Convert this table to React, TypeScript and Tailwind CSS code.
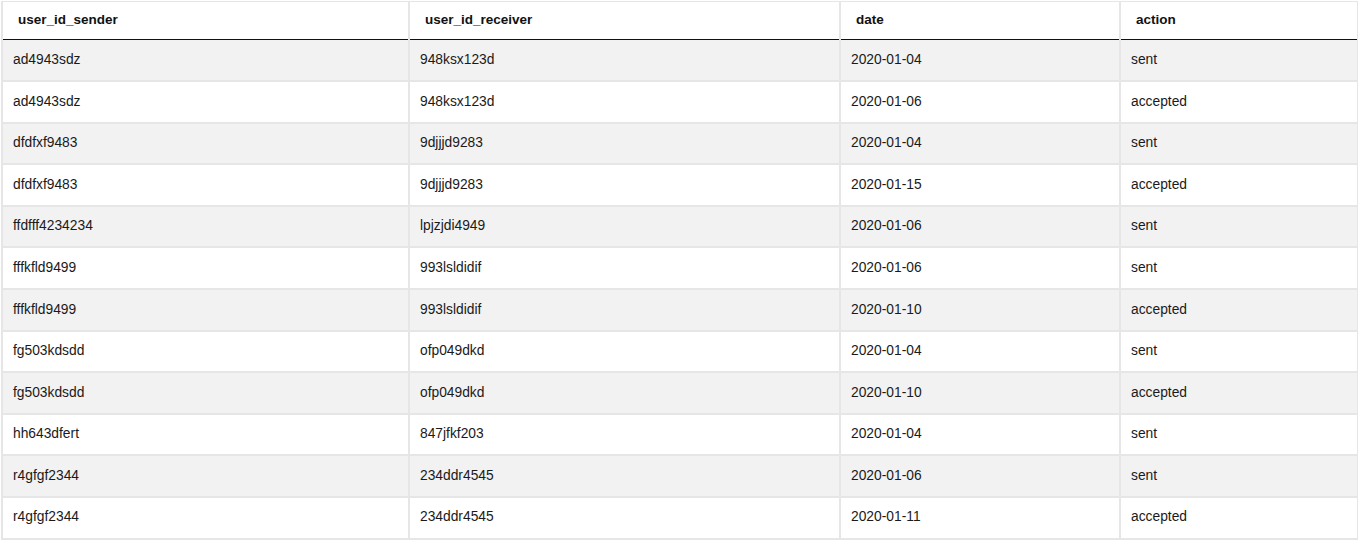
const rows: [string, string, string, string][] = [
  ["ad4943sdz", "948ksx123d", "2020-01-04", "sent"],
  ["ad4943sdz", "948ksx123d", "2020-01-06", "accepted"],
  ["dfdfxf9483", "9djjjd9283", "2020-01-04", "sent"],
  ["dfdfxf9483", "9djjjd9283", "2020-01-15", "accepted"],
  ["ffdfff4234234", "lpjzjdi4949", "2020-01-06", "sent"],
  ["fffkfld9499", "993lsldidif", "2020-01-06", "sent"],
  ["fffkfld9499", "993lsldidif", "2020-01-10", "accepted"],
  ["fg503kdsdd", "ofp049dkd", "2020-01-04", "sent"],
  ["fg503kdsdd", "ofp049dkd", "2020-01-10", "accepted"],
  ["hh643dfert", "847jfkf203", "2020-01-04", "sent"],
  ["r4gfgf2344", "234ddr4545", "2020-01-06", "sent"],
  ["r4gfgf2344", "234ddr4545", "2020-01-11", "accepted"],
];

const headers = ["user_id_sender", "user_id_receiver", "date", "action"];
const widths = ["w-[407px]", "w-[431px]", "w-[280px]", "w-[238px]"];

export default function App() {
  return (
    <div className="bg-white pt-px pl-px font-['Liberation_Sans',Arial,sans-serif] text-[#1a1a1a]">
      <table className="w-[1356px] table-fixed border-collapse">
        <colgroup>
          {widths.map((w, i) => (
            <col key={i} className={w} />
          ))}
        </colgroup>
        <thead>
          <tr className="h-[38px]">
            {headers.map((h) => (
              <th
                key={h}
                className="border-x-2 border-t border-b border-[#e6e6e6] border-b-[#111] pl-[15px] text-left align-middle text-[13.5px] font-bold text-[#111]"
              >
                {h}
              </th>
            ))}
          </tr>
        </thead>
        <tbody>
          {rows.map((r, i) => (
            <tr key={i} className={`h-[41.6px] ${i % 2 === 0 ? "bg-[#f2f2f2]" : "bg-white"}`}>
              {r.map((c, j) => (
                <td
                  key={j}
                  className="border-x-2 border-b-2 border-t-0 border-[#e6e6e6] pl-[10px] align-middle text-[13.8px]"
                >
                  {c}
                </td>
              ))}
            </tr>
          ))}
        </tbody>
      </table>
    </div>
  );
}
